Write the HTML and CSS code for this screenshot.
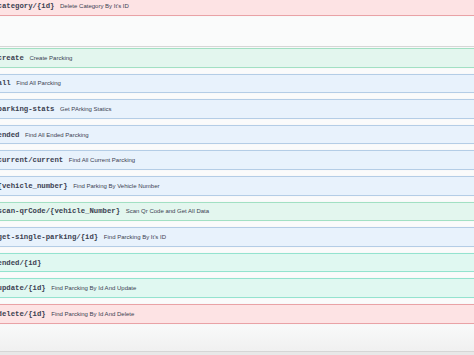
FILE: index.html
```html
<!DOCTYPE html>
<html lang="en">
<head>
    <meta charset="UTF-8">
    <meta name="viewport" content="width=device-width, initial-scale=1.0">
    <title>Parking API</title>
    <link rel="stylesheet" href="styles.css">
</head>
<body>
    <div class="page">
        <div class="section first">
            <div class="op delete">
                <span class="op-path">category/{id}</span>
                <span class="op-desc">Delete Category By It's ID</span>
            </div>
        </div>

        <div class="section parking">
            <div class="op post">
                <span class="op-path">create</span>
                <span class="op-desc">Create Parcking</span>
            </div>
            <div class="op get">
                <span class="op-path">all</span>
                <span class="op-desc">Find All Parcking</span>
            </div>
            <div class="op get">
                <span class="op-path">parking-stats</span>
                <span class="op-desc">Get PArking Statics</span>
            </div>
            <div class="op get">
                <span class="op-path">ended</span>
                <span class="op-desc">Find All Ended Parcking</span>
            </div>
            <div class="op get">
                <span class="op-path">current/current</span>
                <span class="op-desc">Find All Current Parcking</span>
            </div>
            <div class="op get">
                <span class="op-path">{vehicle_number}</span>
                <span class="op-desc">Find Parking By Vehicle Number</span>
            </div>
            <div class="op post">
                <span class="op-path">scan-qrCode/{vehicle_Number}</span>
                <span class="op-desc">Scan Qr Code and Get All Data</span>
            </div>
            <div class="op get">
                <span class="op-path">get-single-parking/{id}</span>
                <span class="op-desc">Find Parcking By It's ID</span>
            </div>
            <div class="op patch">
                <span class="op-path">ended/{id}</span>
            </div>
            <div class="op patch">
                <span class="op-path">update/{id}</span>
                <span class="op-desc">Find Parcking By Id And Update</span>
            </div>
            <div class="op delete">
                <span class="op-path">delete/{id}</span>
                <span class="op-desc">Find Parcking By Id And Delete</span>
            </div>
        </div>
    </div>
</body>
</html>
```

FILE: styles.css
```css
* {
    box-sizing: border-box;
    margin: 0;
    padding: 0;
}
body {
    background-color: #e8e8e8;
    color: #3b4151;
    font-family: 'Liberation Sans', Arial, sans-serif;
    overflow: hidden;
    height: 355px;
}
.page {
    margin-top: -3.6px;
}
.section {
    background: #fafbfb;
    border-bottom: 1px solid #d6d6d6;
}
.section.first {
    padding-bottom: 29.8px;
}
.section.parking {
    padding-top: 1.2px;
    padding-bottom: 21.9px;
    background: linear-gradient(to bottom, #fafbfb 90%, #f0f0f0 100%);
}
.op {
    display: flex;
    align-items: center;
    height: 19.6px;
    margin: 0 -8px 6px;
    padding-left: 4.5px;
    border: 1px solid;
    border-radius: 2px;
    box-shadow: 0 0 1px rgba(0,0,0,0.08);
    white-space: nowrap;
}
.section.first .op {
    margin-bottom: 0;
}
.op-path {
    font-family: 'Liberation Mono', 'Courier New', monospace;
    font-weight: 700;
    font-size: 7.3px;
    color: #3b4151;
}
.op-desc {
    margin-left: 5.6px;
    font-size: 6px;
    color: #3b4151;
}
.delete {
    background: #fde3e4;
    border-color: #e9a2a6;
}
.post {
    background: #e3f6ee;
    border-color: #a2e0c3;
}
.get {
    background: #e8f2fc;
    border-color: #b4cde6;
}
.patch {
    background: #e0f8f1;
    border-color: #94e3cf;
}
```
